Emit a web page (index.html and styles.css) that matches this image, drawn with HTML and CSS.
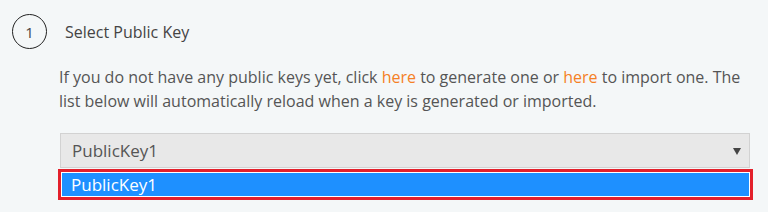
FILE: index.html
```html
<!doctype html>
<html>
    <head>
        <meta charset="utf-8">
        <title>Select Public Key</title>
        <link rel="stylesheet" href="styles.css">
    </head>
    <body>
        <div class="step">
            <div class="stephead">
                <div class="stepnum">1</div>
                <div class="steptitle">Select Public Key</div>
            </div>
            <div class="stepbody">
                <p class="info">
                    If you do not have any public keys yet, click <a href="#">here</a> to generate one or <a href="#">here</a> to import one. The
                    list below will automatically reload when a key is generated or imported.
                </p>
                <div class="selectbox">
                    <span>PublicKey1</span>
                    <span class="arrow"></span>
                </div>
                <div class="dropdown">
                    <div class="option">PublicKey1</div>
                </div>
            </div>
        </div>
    </body>
</html>
```

FILE: styles.css
```css
body {
    margin: 0;
    background-color: #f4f7f8;
    font-family: "Open Sans", "Liberation Sans", sans-serif;
    color: #555;
}
.step {
    padding: 14px 0 0 12px;
}
.stephead {
    display: flex;
    align-items: center;
}
.stepnum {
    width: 33px;
    height: 33px;
    border: 1.5px solid #222;
    border-radius: 50%;
    display: flex;
    align-items: center;
    justify-content: center;
    font-size: 15px;
    color: #444;
}
.steptitle {
    margin-left: 18px;
    font-size: 16px;
    color: #444;
}
.stepbody {
    padding-left: 46px;
    width: 695px;
}
.info {
    margin: 16px 0 0 1px;
    font-size: 16px;
    line-height: 24px;
    color: #555;
}
.info a {
    color: #f58025;
    text-decoration: none;
}
.selectbox {
    margin: 20px 0 0 2px;
    width: 690px;
    height: 35px;
    border: 1px solid #d2d2d2;
    background-color: #e8e8e8;
    display: flex;
    align-items: center;
    justify-content: space-between;
    padding: 0 8px 0 11px;
    box-sizing: border-box;
    font-size: 17px;
    color: #555;
}
.arrow {
    width: 0;
    height: 0;
    border-left: 4px solid transparent;
    border-right: 4px solid transparent;
    border-top: 7px solid #444;
    margin-top: 2px;
}
.dropdown {
    margin-top: 1px;
    width: 695px;
    border: 3px solid #e3202b;
    box-sizing: border-box;
    padding: 1px;
    background-color: #fff;
}
.option {
    background-color: #1e90ff;
    color: #fff;
    font-size: 17px;
    height: 23px;
    line-height: 23px;
    padding-left: 9px;
}
```
